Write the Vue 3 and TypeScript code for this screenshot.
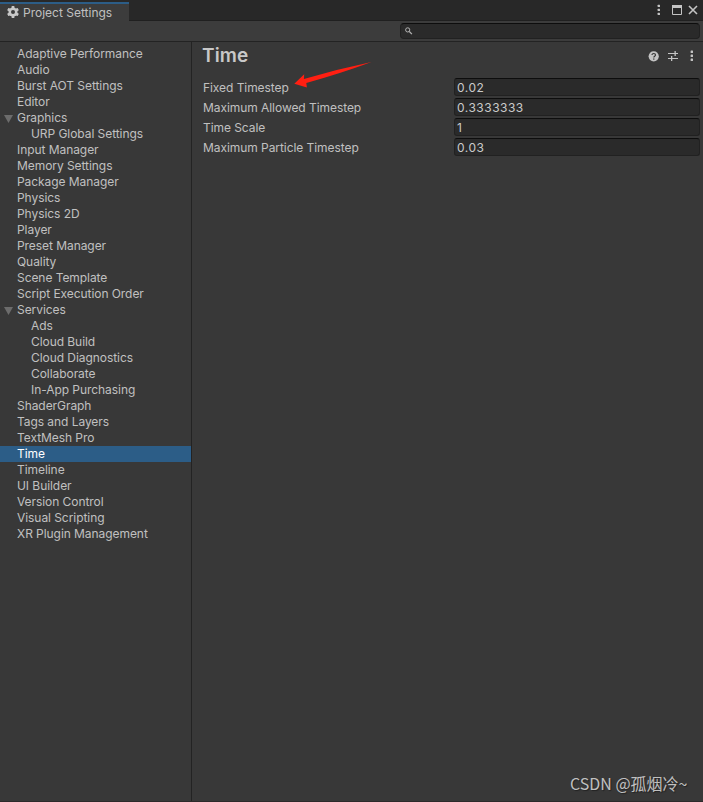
<script setup lang="ts">
import { ref } from 'vue'

interface Category {
  name: string
  child?: boolean
  open?: boolean
}

const categories: Category[] = [
  { name: 'Adaptive Performance' },
  { name: 'Audio' },
  { name: 'Burst AOT Settings' },
  { name: 'Editor' },
  { name: 'Graphics', open: true },
  { name: 'URP Global Settings', child: true },
  { name: 'Input Manager' },
  { name: 'Memory Settings' },
  { name: 'Package Manager' },
  { name: 'Physics' },
  { name: 'Physics 2D' },
  { name: 'Player' },
  { name: 'Preset Manager' },
  { name: 'Quality' },
  { name: 'Scene Template' },
  { name: 'Script Execution Order' },
  { name: 'Services', open: true },
  { name: 'Ads', child: true },
  { name: 'Cloud Build', child: true },
  { name: 'Cloud Diagnostics', child: true },
  { name: 'Collaborate', child: true },
  { name: 'In-App Purchasing', child: true },
  { name: 'ShaderGraph' },
  { name: 'Tags and Layers' },
  { name: 'TextMesh Pro' },
  { name: 'Time' },
  { name: 'Timeline' },
  { name: 'UI Builder' },
  { name: 'Version Control' },
  { name: 'Visual Scripting' },
  { name: 'XR Plugin Management' },
]

const selected = ref('Time')

const fields = ref([
  { label: 'Fixed Timestep', value: '0.02' },
  { label: 'Maximum Allowed Timestep', value: '0.3333333' },
  { label: 'Time Scale', value: '1' },
  { label: 'Maximum Particle Timestep', value: '0.03' },
])
</script>

<template>
  <div class="window">
    <header class="tabbar">
      <div class="tab">
        <svg class="gear" width="12" height="12" viewBox="0 0 12 12">
          <g fill="#c8c8c8">
            <rect x="4.6" y="0" width="2.8" height="12" rx=".5" />
            <rect x="4.6" y="0" width="2.8" height="12" rx=".5" transform="rotate(60 6 6)" />
            <rect x="4.6" y="0" width="2.8" height="12" rx=".5" transform="rotate(120 6 6)" />
            <circle cx="6" cy="6" r="4.5" />
          </g>
          <circle cx="6" cy="6" r="2" fill="#3c3c3c" />
        </svg>
        <span class="tab-title">Project Settings</span>
      </div>
      <div class="window-buttons">
        <svg width="4" height="12" viewBox="0 0 4 12" fill="#c4c4c4">
          <rect x=".6" y=".7" width="2.4" height="2.4" rx=".5" />
          <rect x=".6" y="4.7" width="2.4" height="2.4" rx=".5" />
          <rect x=".6" y="8.7" width="2.4" height="2.4" rx=".5" />
        </svg>
        <svg class="maximize" width="10" height="10" viewBox="0 0 10 10">
          <path d="M.5 .5h9v9h-9z" fill="none" stroke="#c4c4c4" />
          <path d="M0 0h10v3H0z" fill="#c4c4c4" />
        </svg>
        <svg class="close" width="10" height="10" viewBox="0 0 10 10">
          <path d="M1 1l8 8M9 1l-8 8" stroke="#c4c4c4" stroke-width="1.6" />
        </svg>
      </div>
    </header>

    <div class="toolbar">
      <div class="search">
        <svg width="8" height="8" viewBox="0 0 8 8" fill="none" stroke="#b4b4b4">
          <circle cx="2.7" cy="2.9" r="2.1" stroke-width="1" />
          <path d="M4.3 4.5l2.6 2.6" stroke-width="1.2" />
        </svg>
      </div>
    </div>

    <div class="body">
      <nav class="sidebar">
        <div
          v-for="item in categories"
          :key="item.name"
          class="item"
          :class="{ child: item.child, selected: item.name === selected }"
          @click="selected = item.name"
        >
          <span class="foldout">
            <svg v-if="item.open" width="9" height="8" viewBox="0 0 9 8">
              <path d="M0 0h9L4.5 8z" fill="#6c6c6c" />
            </svg>
          </span>
          <span>{{ item.name }}</span>
        </div>
      </nav>

      <main class="panel">
        <div class="panel-head">
          <h1>Time</h1>
          <div class="panel-icons">
            <svg width="11" height="11" viewBox="0 0 11 11">
              <circle cx="5.7" cy="5.3" r="5.1" fill="#c4c4c4" />
              <path d="M4 4.1c0-2.2 3.5-2.1 3.5 0 0 1.2-1.7 1.1-1.7 2.5" fill="none" stroke="#383838" stroke-width="1.2" />
              <rect x="5.2" y="7.4" width="1.2" height="1.3" fill="#383838" />
            </svg>
            <svg class="preset" width="11" height="10" viewBox="0 0 11 10" fill="#c4c4c4">
              <path d="M0 2h6.5V0h1.3v2H10v1.1H7.8V5H6.5V3.1H0z" />
              <path d="M0 7h3V5h1.3v2H10v1.1H4.3V10H3V8.1H0z" />
            </svg>
            <svg class="more" width="4" height="12" viewBox="0 0 4 12" fill="#c4c4c4">
              <rect x=".6" y=".6" width="2.4" height="2.4" rx=".5" />
              <rect x=".6" y="4.6" width="2.4" height="2.4" rx=".5" />
              <rect x=".6" y="8.6" width="2.4" height="2.4" rx=".5" />
            </svg>
          </div>
        </div>
        <label v-for="field in fields" :key="field.label" class="field">
          <span class="field-label">{{ field.label }}</span>
          <input v-model="field.value" type="text" />
        </label>

        <svg class="arrow" width="80" height="30" viewBox="0 0 80 30">
          <path d="M1.3 22.8L11.2 13.2l-.3 4.9Q44 8.3 78.5 1.1Q45 13.5 13.3 22l.6 4.6z" fill="#ff1f12" />
        </svg>
      </main>
    </div>

    <div class="watermark">CSDN @孤烟冷~</div>
  </div>
</template>

<style>
body {
  background: #383838;
}
</style>

<style scoped>
.window {
  position: relative;
  box-sizing: border-box;
  display: flex;
  flex-direction: column;
  height: 802px;
  overflow: hidden;
  background: #383838;
  border-bottom: 1px solid #2d2a2b;
  color: #c0c0c0;
  font-family: Inter, 'Liberation Sans', sans-serif;
  font-size: 12px;
  letter-spacing: -0.06px;
}

.tabbar {
  display: flex;
  justify-content: space-between;
  flex: none;
  height: 21px;
  background: #282828;
  box-shadow: inset 0 -1px #202020;
}

.tab {
  box-sizing: border-box;
  display: flex;
  align-items: center;
  width: 129px;
  height: 19px;
  margin-top: 2px;
  padding: 0 0 2px 7px;
  border-top: 2px solid #2c5d87;
  background: #3c3c3c;
  letter-spacing: 0;
}

.gear {
  margin-top: 1px;
}

.tab-title {
  margin: 2px 0 0 4px;
  white-space: nowrap;
}

.window-buttons {
  display: flex;
  align-items: center;
  height: 20px;
  padding-right: 5px;
}

.maximize {
  margin-left: 11px;
}

.close {
  margin-left: 6px;
}

.toolbar {
  box-sizing: border-box;
  display: flex;
  flex: none;
  justify-content: flex-end;
  height: 21px;
  padding: 2px 3px 0 0;
  border-bottom: 1px solid #232323;
  background: #3c3c3c;
}

.search {
  box-sizing: border-box;
  display: flex;
  align-items: center;
  width: 300px;
  height: 16px;
  padding-left: 4px;
  border: 1px solid #212121;
  border-top-color: #0d0d0d;
  border-radius: 4px;
  background: #2a2a2a;
}

.body {
  display: flex;
  flex: 1;
}

.sidebar {
  box-sizing: border-box;
  width: 192px;
  padding-top: 4px;
  border-right: 1px solid #232323;
}

.item {
  display: flex;
  height: 16px;
  line-height: 16px;
  white-space: nowrap;
}

.foldout {
  display: flex;
  align-items: center;
  box-sizing: border-box;
  width: 17px;
  padding: 1px 0 0 4px;
}

.child .foldout {
  width: 31px;
}

.selected {
  background: #2c5d87;
  color: #fff;
}

.panel {
  position: relative;
  flex: 1;
  padding: 0 3px 0 11px;
}

.panel-head {
  display: flex;
  justify-content: space-between;
  height: 36px;
}

h1 {
  margin: 0 0 0 -1px;
  color: #c8c8c8;
  font-size: 19px;
  font-weight: 600;
  line-height: 27px;
  letter-spacing: 0.1px;
}

.panel-icons {
  display: flex;
  align-items: center;
  height: 28px;
  padding-right: 6px;
}

.preset {
  margin-left: 9px;
}

.more {
  margin-left: 11px;
}

.field {
  display: flex;
  align-items: center;
  height: 18px;
  margin-bottom: 2px;
}

.field-label {
  width: 251px;
  white-space: nowrap;
}

input {
  box-sizing: border-box;
  flex: 1;
  min-width: 0;
  height: 18px;
  padding: 1px 2px 0;
  border: 1px solid #212121;
  border-top-color: #0d0d0d;
  border-radius: 3px;
  outline: none;
  background: #2a2a2a;
  color: #cacaca;
  font: inherit;
  letter-spacing: 0.5px;
}

.arrow {
  position: absolute;
  left: 101px;
  top: 19px;
}

.watermark {
  position: absolute;
  left: 570px;
  top: 772px;
  color: #c0c0c0;
  font-family: 'Noto Sans CJK SC', sans-serif;
  font-size: 16px;
  line-height: 22px;
  letter-spacing: 0;
  text-shadow: 1px 1px 1px #222;
  white-space: nowrap;
}
</style>
